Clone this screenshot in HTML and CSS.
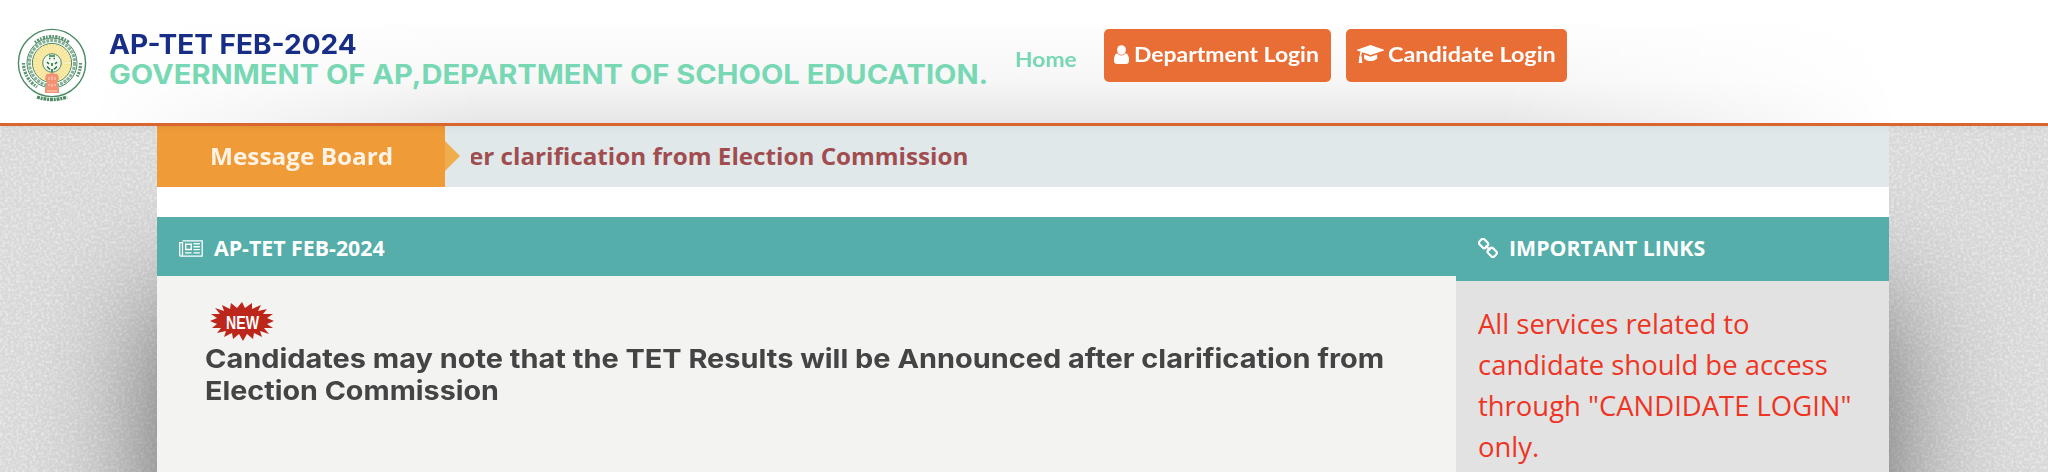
FILE: index.html
```html
<!DOCTYPE html>
<html lang="en">
<head>
<meta charset="utf-8">
<title>AP-TET FEB-2024</title>
<link rel="stylesheet" href="styles.css">
</head>
<body>
<svg class="fabric" aria-hidden="true">
  <filter id="weave" x="0" y="0" width="100%" height="100%">
    <feTurbulence type="fractalNoise" baseFrequency="0.36" numOctaves="2" seed="8"/>
    <feColorMatrix values="0 0 0 0 1  0 0 0 0 1  0 0 0 0 1  2.6 0 0 0 -1.05"/>
  </filter>
  <rect width="100%" height="100%" filter="url(#weave)"/>
</svg>
<header class="header">
  <svg class="emblem" viewBox="0 0 70 75">
    <g fill="none" stroke="#4b8a62">
      <circle cx="35" cy="35" r="33.6" fill="#fff" stroke-width="1.4"/>
      <circle cx="35" cy="35" r="25" stroke-width="1"/>
      <circle cx="35" cy="35" r="22.6" stroke="#86b096" stroke-width="3.2" stroke-dasharray="3 1"/>
      <circle cx="35" cy="35" r="19.6" fill="#f8e28f" stroke-width="1"/>
      <circle cx="35" cy="35" r="14" stroke="#fbefbd" stroke-width="10" stroke-dasharray="1 1.4"/>
      <circle cx="35" cy="35" r="9.3" fill="#f4f8ef" stroke-width="1"/>
      <path d="M18 14.500A27 27 0 0 1 52 14.500M6.500 35A28.500 28.500 0 0 0 20 59M63.500 35A28.500 28.500 0 0 1 60 49" stroke="#5f9574" stroke-width="3.200" stroke-dasharray="1.600 1.200 2.400 1"/>
    </g>
    <path d="M30 34l2 2m8-2l-2 2M32 30.500h1.500m3 0H38M30 38.500l3 3m7-3l-3 3M35 35v3m0 3v3M32 28h6" fill="none" stroke="#2f7a4d" stroke-width="1.700"/>
    <path d="M29 47q1-2 3-1 3-2 6 0 2-1 3 1l1 4-2 3 1 4v2h1v5H28v-5h1v-2l1-4-2-3z" fill="#f29273"/>
    <path d="M32 49v3m3-4v4m3-3v3M31 57h2m2-1v3m2-2h2M30 63h10" stroke="#fbd6c8" stroke-width="1"/>
    <path d="M20 69q15 5 30 0" fill="none" stroke="#4b8a62" stroke-width="3.400" stroke-dasharray="3 .8 2 .8"/>
  </svg>
  <div class="brand">
    <div class="brand-title"><span class="t1">AP-TET FEB-2024</span></div>
    <div class="brand-sub"><span class="t2">GOVERNMENT OF AP,DEPARTMENT OF SCHOOL EDUCATION.</span></div>
  </div>
  <nav class="nav">
    <a class="home"><span class="t-home">Home</span></a>
    <a class="btn dept">
      <svg class="i-user" viewBox="0 0 15 19"><ellipse cx="7.5" cy="5" rx="4.4" ry="4.8" fill="#fff"/><path d="M3.2 8.2Q0 9 0 15.500Q0 19 3.300 19h8.400Q15 19 15 15.500Q15 9 11.800 8.200Q10 10.600 7.500 10.600T3.200 8.200z" fill="#fff"/></svg>
      <span class="t3">Department Login</span>
    </a>
    <a class="btn cand">
      <svg class="i-cap" viewBox="0 0 27 19"><path d="M13.500 0L27 4.800v.7L13.500 10 5.500 7.300Q4.300 8.500 4.200 11q1 .8.500 2l.6 5H1.600l.7-5q-.7-1.200.4-2 .1-2.600 1-4.200L0 5.500v-.7z" fill="#fff"/><path d="M7.200 9.500l6.300 2.200 6.500-2.200.3 3.700Q18 16 13.500 16T7 13.200z" fill="#fff"/></svg>
      <span class="t4">Candidate Login</span>
    </a>
  </nav>
</header>
<main class="page">
  <section class="board">
    <div class="board-label"><span class="t5">Message Board</span></div>
    <div class="ticker"><span class="t6">er clarification from Election Commission</span></div>
  </section>
  <div class="columns">
    <section class="news">
      <h2 class="bar">
        <svg class="i-news" viewBox="0 0 24 17" fill="none" stroke="#fff"><path d="M3.500.8h19.700v15.400H2Q.7 16.200.7 14.600V2.700h2.800v11.800Q3.500 16 2.300 16.200" stroke-width="1.300"/><path d="M6.700 4.200h5.600v5.300H6.700zM14.500 3.800h6.300M14.500 6.700h6.300M14.500 9.600h6.300M6 12.900h6.500M14.500 12.900h6.300" stroke-width="1.400"/></svg>
        <span class="t7">AP-TET FEB-2024</span>
      </h2>
      <div class="news-body">
        <svg class="new" viewBox="0 0 64 39"><path d="M32 0l3 6 7-5 0 6 9-4-3 6 9-2-4 5 10 0-6 4 7 3-7 3 6 4-9 0 5 6-9-3 2 6-8-4-1 6-6-5-4 7-4-7-6 5-1-6-8 4 2-6-9 2 4-5-9 0 5-4-7-3 7-3-6-4 9 0-5-6 9 3-2-6 8 4 1-6 6 5z" fill="#bd271b"/><text x="16" y="26.500" textLength="33" lengthAdjust="spacingAndGlyphs">NEW</text></svg>
        <p class="notice"><span class="t8">Candidates may note that the TET Results will be Announced after clarification from</span><br><span class="t9">Election Commission</span></p>
      </div>
    </section>
    <aside class="links">
      <h2 class="bar">
        <svg class="i-link" viewBox="0 0 20 20" fill="none" stroke="#fff" stroke-width="1.900"><rect x="-3.800" y="-3" width="7.600" height="6" rx="2" transform="translate(5.600 5.500) rotate(45) scale(1.150)"/><rect x="-3.800" y="-3" width="7.600" height="6" rx="2" transform="translate(14.200 14.300) rotate(45) scale(1.150)"/><path d="M7.500 7.500l4.800 4.800"/></svg>
        <span class="t10">IMPORTANT LINKS</span>
      </h2>
      <p class="service">All services related to<br>candidate should be access<br>through "CANDIDATE LOGIN"<br>only.</p>
    </aside>
  </div>
</main>
</body>
</html>
```
FILE: styles.css
```css
* { box-sizing: border-box; }
body {
  margin: 0;
  width: 2048px;
  height: 472px;
  overflow: hidden;
  position: relative;
  background: #d8d8d8;
  font-family: "Open Sans", sans-serif;
}
span { display: inline-block; white-space: nowrap; transform-origin: left center; }
.fabric { position: absolute; inset: 0; width: 100%; height: 100%; opacity: .45; }
.header {
  position: relative;
  z-index: 2;
  height: 126px;
  display: flex;
  align-items: flex-start;
  background: #fff;
  border-bottom: 3px solid #d9652f;
  box-shadow: 0 1px 8px rgba(0,0,0,.06);
}
.header::before {
  content: "";
  position: absolute;
  inset: 25px 0 0;
  background: linear-gradient(#fdfdfd, #f7f7f7 55%, #e6e6e6);
  mask-image: linear-gradient(90deg, transparent 90px, #000 480px, #000 1500px, transparent 1900px);
}
.header > * { position: relative; }
.emblem { width: 70px; height: 75px; margin: 28px 0 0 17px; }
.brand {
  width: 928px;
  padding: 29px 0 0 22px;
  font: 700 27px/31px Inter, sans-serif;
}
.brand-title { color: #172d86; }
.brand-sub { color: #79d8b4; }
.t1 { transform: scaleX(1.038); }
.t2 { transform: translateY(-1px) scaleX(1.077); }
.nav { display: flex; font: 700 21px/26px Lato, sans-serif; }
.home { width: 89px; padding: 46px 0 0; color: #79d8b4; }
.t-home { transform: scaleX(1.09); }
.t3 { transform: scaleX(1.092); }
.t4 { transform: scaleX(1.113); }
.btn {
  height: 53px;
  margin-top: 29px;
  display: flex;
  align-items: flex-start;
  background: #e96e35;
  color: #fff;
  border-radius: 5px;
  padding: 12px 0 0 10px;
}
.dept { width: 227px; margin-right: 15px; }
.cand { width: 221px; padding-left: 11px; }
.i-user { width: 15px; height: 19px; margin: 4px 5px 0 0; }
.i-cap { width: 27px; height: 19px; margin: 4px 4px 0 0; }
.page {
  position: relative;
  width: 1732px;
  height: 346px;
  margin-left: 156.500px;
  background: #fff;
  box-shadow: 0 170px 125px rgba(0,0,0,.55);
}
.board { display: flex; height: 60.500px; background: #e0e8ea; }
.board-label {
  position: relative;
  width: 288.500px;
  padding: 13px 0 0 53px;
  background: #ef9b38;
  color: #fff3e6;
  font: 700 24px/33px "Open Sans", sans-serif;
}
.board-label::after {
  content: "";
  position: absolute;
  left: 100%;
  top: 15px;
  border: 15px solid transparent;
  border-left-color: #efad4e;
  border-right-width: 0;
}
.ticker {
  margin-left: 25.500px;
  padding-top: 13px;
  overflow: hidden;
  color: #a14d50;
  font: 700 24px/33px "Open Sans", sans-serif;
}
.t5 { transform: scaleX(1.014); }
.t6 { transform: translateX(-2px) scaleX(1.009); }
.ticker { padding-right: 10px; }
.columns { display: flex; padding-top: 30.500px; height: 285px; }
.news { width: 1299px; background: #f3f3f1; }
.links { width: 433px; background: #e2e2e2; }
.bar {
  margin: 0;
  height: 59px;
  display: flex;
  align-items: center;
  background: #55aea9;
  color: #fff;
  font: 700 21px/30px "Open Sans", sans-serif;
  padding: 3px 0 0 22.500px;
}
.t7, .t10 { transform: translateY(-.5px) scaleX(1.015); }
.links .bar { height: 63.500px; padding-bottom: 5px; }
.i-news { width: 24px; height: 17px; margin-right: 11px; }
.i-link { width: 20px; height: 20px; margin-right: 11px; }
.news-body { padding: 26px 0 0 48.500px; }
.new { display: block; width: 64px; height: 39px; margin-left: 5px; }
.new text { font: 700 19px "Liberation Sans", sans-serif; fill: #fff; }
.notice { margin: 2px 0 0; color: #444; font: 700 26px/32px Inter, sans-serif; }
.t8 { transform: scaleX(1.112); }
.t9 { transform: scaleX(1.103); }
.service { margin: 0; padding: 22px 0 0 22.500px; color: #ee3524; font: 400 27.450px/41px "Open Sans", sans-serif; white-space: nowrap; }
```
